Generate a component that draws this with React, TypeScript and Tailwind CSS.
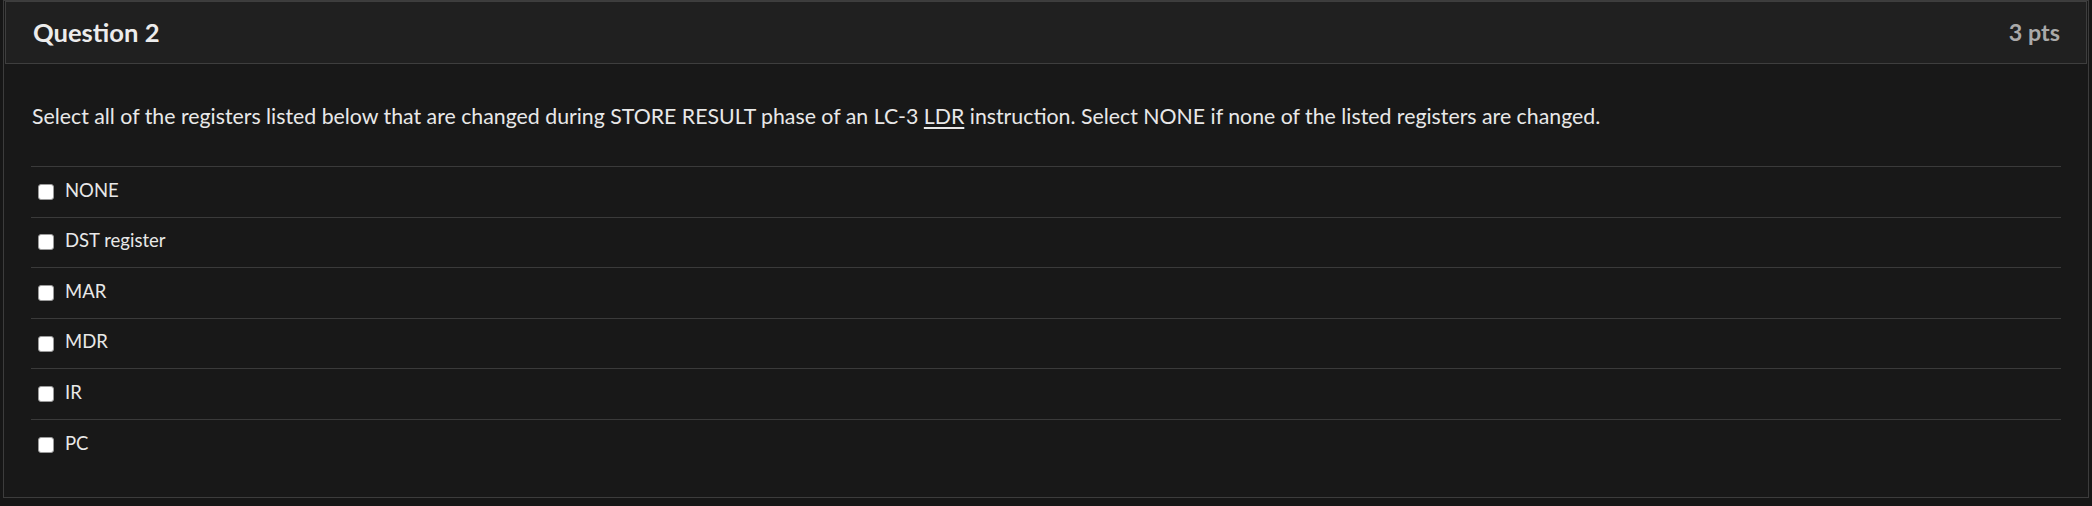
import React from "react";

const options = ["NONE", "DST register", "MAR", "MDR", "IR", "PC"];

export default function App() {
  return (
    <div
      className="min-h-screen w-[2092px] bg-[#161616] pl-[3px]"
      style={{ fontFamily: "Lato, 'Noto Sans', sans-serif" }}
    >
      <div className="w-[2086px] h-[498px] border border-[#3c3c3c] bg-[#181818] flex flex-col">
        <div className="mx-px h-[63px] border border-[#3e3e3e] bg-[#202020] flex items-center justify-between pl-[27px] pr-[26px]">
          <div className="text-[25.6px] font-bold text-[#ececec] leading-none">Question 2</div>
          <div className="text-[23.3px] font-bold text-[#a9a9a9] leading-none">3 pts</div>
        </div>
        <div className="px-[27px] pt-[37px]">
          <p className="text-[21.3px] leading-[30px] text-[#e8e8e8] pl-px">
            Select all of the registers listed below that are changed during STORE RESULT phase of an LC-3{" "}
            <span className="underline underline-offset-[3px]">LDR</span> instruction. Select NONE if none of the listed registers are changed.
          </p>
          <div className="mt-[35px]">
            {options.map((o) => (
              <div
                key={o}
                className="h-[50.6px] border-t border-[#3a3a3a] flex items-center pl-[7px]"
              >
                <span className="w-[16px] h-[16px] rounded-[3px] bg-white border border-[#9a9a9a] shrink-0" />
                <span className="ml-[11px] mb-[4px] text-[18.5px] text-[#e8e8e8] leading-none">{o}</span>
              </div>
            ))}
          </div>
        </div>
      </div>
    </div>
  );
}
